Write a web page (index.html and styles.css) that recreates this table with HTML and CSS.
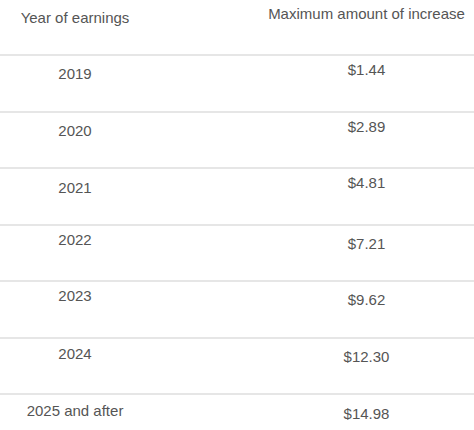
FILE: index.html
```html
<!DOCTYPE html>
<html>
<head>
<meta charset="utf-8">
<link rel="stylesheet" href="styles.css">
</head>
<body>
<div class="table">
  <div class="row head">
    <div class="cell year hd-left">Year of earnings</div>
    <div class="cell amount hd-right">Maximum amount of increase</div>
  </div>
  <div class="row odd">
    <div class="cell year low">2019</div>
    <div class="cell amount high">$1.44</div>
  </div>
  <div class="row">
    <div class="cell year low">2020</div>
    <div class="cell amount high">$2.89</div>
  </div>
  <div class="row odd">
    <div class="cell year lower">2021</div>
    <div class="cell amount high">$4.81</div>
  </div>
  <div class="row">
    <div class="cell year high">2022</div>
    <div class="cell amount low">$7.21</div>
  </div>
  <div class="row odd">
    <div class="cell year high">2023</div>
    <div class="cell amount low">$9.62</div>
  </div>
  <div class="row">
    <div class="cell year mid">2024</div>
    <div class="cell amount low">$12.30</div>
  </div>
  <div class="row last">
    <div class="cell year mid2">2025 and after</div>
    <div class="cell amount lower">$14.98</div>
  </div>
</div>
</body>
</html>
```

FILE: styles.css
```css
html, body {
  margin: 0;
  padding: 0;
  background: #ffffff;
}

.table {
  width: 474px;
  font-family: "Liberation Sans", Arial, sans-serif;
  font-size: 15px;
  line-height: 18px;
  color: #555555;
}

.row {
  display: grid;
  grid-template-columns: 150px 1fr 215px;
  height: 56px;
  box-sizing: border-box;
  border-top: 2px solid #e6e6e6;
}

.row.odd {
  height: 57px;
}

.row.head {
  height: 54px;
  border-top: none;
}

.row.last {
  height: 37px;
}

.cell {
  text-align: center;
  white-space: nowrap;
}

.year {
  grid-column: 1;
}

.amount {
  grid-column: 3;
}

.hd-left { padding-top: 9px; }
.hd-right { padding-top: 5px; }
.high { padding-top: 5px; }
.mid { padding-top: 6px; }
.mid2 { padding-top: 7px; }
.low { padding-top: 9px; }
.lower { padding-top: 10px; }
```
